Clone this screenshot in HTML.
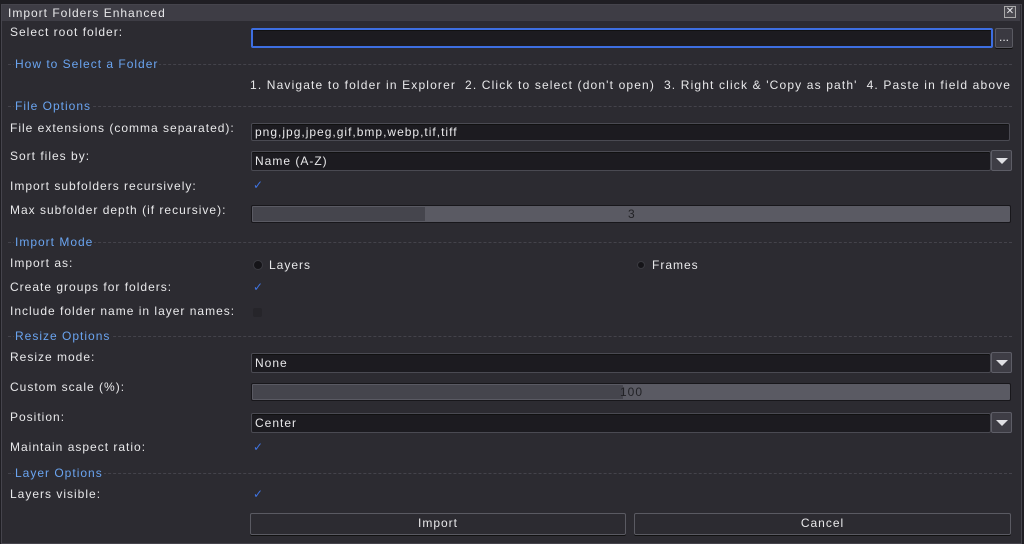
<!DOCTYPE html>
<html><head><meta charset="utf-8"><style>
*{margin:0;padding:0;box-sizing:border-box}
body{width:1024px;height:544px;background:#1f1e23;position:relative;overflow:hidden;font-family:"Liberation Sans",sans-serif;font-size:12px;color:#e8e8ea;letter-spacing:1px}
.a{position:absolute;white-space:nowrap}
#dlg{position:absolute;left:1px;top:4px;width:1021px;height:540px;background:#2c2b31;border:1px solid #45444c}
#title{position:absolute;left:2px;top:5px;width:1018px;height:16px;background:#3e3d45}
.lbl{position:absolute;left:10px;line-height:14px;white-space:nowrap}
.sec{position:absolute;left:8px;right:12px;height:1px;border-top:1px dashed #44434b}
.sec span{position:absolute;left:6px;top:-8px;background:#2c2b31;padding:0 1px;color:#6aa4f0;line-height:14px;white-space:nowrap}
.fld{position:absolute;background:#1c1b20;border:1px solid #4a4a52;border-radius:2px;box-shadow:inset 0 1px 0 #111}
.fld span{position:absolute;left:3px;top:1px;line-height:14px;white-space:nowrap}
.btn{position:absolute;background:#3a3941;border:1px solid #5a5a62;border-radius:2px;box-shadow:0 1px 0 #111;text-align:center;line-height:18px}
.arr{position:absolute;width:21px;height:21px;background:#3e3d45;border:1px solid #5d5d66;border-radius:2px}
.arr:after{content:"";position:absolute;left:4px;top:7px;border-left:6px solid transparent;border-right:6px solid transparent;border-top:6px solid #e0e0e4}
.sl{position:absolute;left:251px;width:760px;height:18px;background:#5a5a63;border:1px solid #18171b;border-radius:2px}
.sl i{position:absolute;left:1px;top:1px;bottom:1px;background:#45454d}
.sl span{position:absolute;top:1px;line-height:14px;color:#222226}
.ck{position:absolute;left:253px;width:9px;height:9px;color:#3f73e0;font-size:12px;line-height:9px}
.rd{position:absolute;width:10px;height:10px;border-radius:50%;background:#151418;border:1px solid #3a3a40}
</style></head><body>
<div id="dlg"></div>
<div id="title"></div>
<div class="a" style="left:8px;top:6px;line-height:14px">Import Folders Enhanced</div>
<div class="a" style="left:1004px;top:6px;width:12px;height:12px;background:#4a4950;border:1px solid #aaa;font-size:10px;line-height:10px;text-align:center;letter-spacing:0">✕</div>

<div class="lbl" style="top:25px">Select root folder:</div>
<div class="fld" style="left:251px;top:28px;width:742px;height:20px;border:2px solid #3d6ee0"></div>
<div class="btn" style="left:995px;top:28px;width:18px;height:20px;line-height:16px;letter-spacing:0">...</div>

<div class="sec" style="top:64px"><span>How to Select a Folder</span></div>
<div class="a" style="left:250px;top:78px;line-height:14px;letter-spacing:1.15px">1. Navigate to folder in Explorer&nbsp; 2. Click to select (don't open)&nbsp; 3. Right click &amp; 'Copy as path'&nbsp; 4. Paste in field above</div>

<div class="sec" style="top:106px"><span>File Options</span></div>
<div class="lbl" style="top:121px">File extensions (comma separated):</div>
<div class="fld" style="left:251px;top:123px;width:759px;height:18px"><span style="top:1px">png,jpg,jpeg,gif,bmp,webp,tif,tiff</span></div>
<div class="lbl" style="top:149px">Sort files by:</div>
<div class="fld" style="left:251px;top:151px;width:740px;height:20px"><span style="top:2px">Name (A-Z)</span></div>
<div class="arr" style="left:991px;top:150px"></div>
<div class="lbl" style="top:179px">Import subfolders recursively:</div>
<div class="ck" style="top:181px">✓</div>
<div class="lbl" style="top:203px">Max subfolder depth (if recursive):</div>
<div class="sl" style="top:205px"><i style="width:172px"></i><span style="left:376px">3</span></div>

<div class="sec" style="top:242px"><span>Import Mode</span></div>
<div class="lbl" style="top:256px">Import as:</div>
<div class="rd" style="left:253px;top:260px"></div>
<div class="a" style="left:269px;top:258px;line-height:14px">Layers</div>
<div class="rd" style="left:637px;top:261px;width:8px;height:8px"></div>
<div class="a" style="left:652px;top:258px;line-height:14px">Frames</div>
<div class="lbl" style="top:280px">Create groups for folders:</div>
<div class="ck" style="top:283px">✓</div>
<div class="lbl" style="top:304px">Include folder name in layer names:</div>
<div class="a" style="left:253px;top:308px;width:9px;height:9px;background:#26252a;border-radius:2px"></div>

<div class="sec" style="top:336px"><span>Resize Options</span></div>
<div class="lbl" style="top:350px">Resize mode:</div>
<div class="fld" style="left:251px;top:353px;width:740px;height:20px"><span style="top:2px">None</span></div>
<div class="arr" style="left:991px;top:352px"></div>
<div class="lbl" style="top:380px">Custom scale (%):</div>
<div class="sl" style="top:383px"><i style="width:370px"></i><span style="left:368px">100</span></div>
<div class="lbl" style="top:410px">Position:</div>
<div class="fld" style="left:251px;top:413px;width:740px;height:20px"><span style="top:2px">Center</span></div>
<div class="arr" style="left:991px;top:412px"></div>
<div class="lbl" style="top:440px">Maintain aspect ratio:</div>
<div class="ck" style="top:443px">✓</div>

<div class="sec" style="top:473px"><span>Layer Options</span></div>
<div class="lbl" style="top:487px">Layers visible:</div>
<div class="ck" style="top:490px">✓</div>

<div class="btn" style="left:250px;top:513px;width:376px;height:22px;background:#2c2b31">Import</div>
<div class="btn" style="left:634px;top:513px;width:377px;height:22px;background:#2c2b31">Cancel</div>
</body></html>
